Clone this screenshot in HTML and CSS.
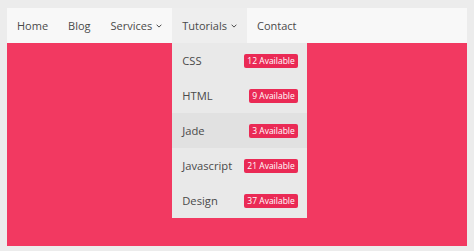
FILE: index.html
```html
<!DOCTYPE html>
<html lang="en">
<head>
  <meta charset="UTF-8" />
  <meta name="viewport" content="width=device-width, initial-scale=1.0" />
  <title>Dropdown Menu</title>
  <link rel="stylesheet" href="styles.css">
</head>
<body>
  <div class="page">
    <nav class="menu">
      <ul>
        <li><a href="#">Home</a></li>
        <li><a href="#">Blog</a></li>
        <li><a href="#">Services <svg class="caret" viewBox="0 0 6 4"><path d="M0.6 0.7 L3 3.1 L5.4 0.7" /></svg></a></li>
        <li class="open">
          <a href="#">Tutorials <svg class="caret" viewBox="0 0 6 4"><path d="M0.6 0.7 L3 3.1 L5.4 0.7" /></svg></a>
          <ul class="dropdown">
            <li><a href="#">CSS <span class="badge">12 Available</span></a></li>
            <li><a href="#">HTML <span class="badge">9 Available</span></a></li>
            <li class="hover"><a href="#">Jade <span class="badge">3 Available</span></a></li>
            <li><a href="#">Javascript <span class="badge">21 Available</span></a></li>
            <li><a href="#">Design <span class="badge">37 Available</span></a></li>
          </ul>
        </li>
        <li><a href="#">Contact</a></li>
      </ul>
    </nav>
    <div class="hero"></div>
  </div>
</body>
</html>
```

FILE: styles.css
```css
body {
  margin: 0;
  padding: 0;
  background: #ececec;
  font-family: 'Open Sans', sans-serif;
}
.page {
  width: 460px;
  margin: 8px 7px 0;
}
.menu {
  background: #f8f8f8;
}
.menu ul {
  list-style: none;
  margin: 0;
  padding: 0;
}
.menu > ul {
  display: flex;
  height: 35px;
}
.menu > ul > li {
  position: relative;
}
.menu a {
  display: flex;
  align-items: center;
  gap: 4px;
  padding: 0 10px;
  height: 35px;
  font-size: 11px;
  color: #4a4a4a;
  text-decoration: none;
}
.menu li.open {
  background: #eeeeee;
}
.caret {
  width: 6px;
  height: 4px;
  margin-top: 1px;
  fill: none;
  stroke: #4a4a4a;
  stroke-width: 1;
}
.dropdown {
  position: absolute;
  top: 100%;
  left: 0;
  width: 135px;
  background: #e9e9e9;
  z-index: 10;
}
.dropdown a {
  justify-content: space-between;
  padding: 0 9px 0 10px;
  font-size: 11.2px;
}
.dropdown li.hover {
  background: #e1e1e1;
}
.badge {
  background: #ea2a55;
  color: #fff;
  font-size: 8.5px;
  line-height: 14px;
  padding: 0 3.5px;
  border-radius: 2px;
}
.hero {
  height: 203px;
  background: #f23961;
}
```
